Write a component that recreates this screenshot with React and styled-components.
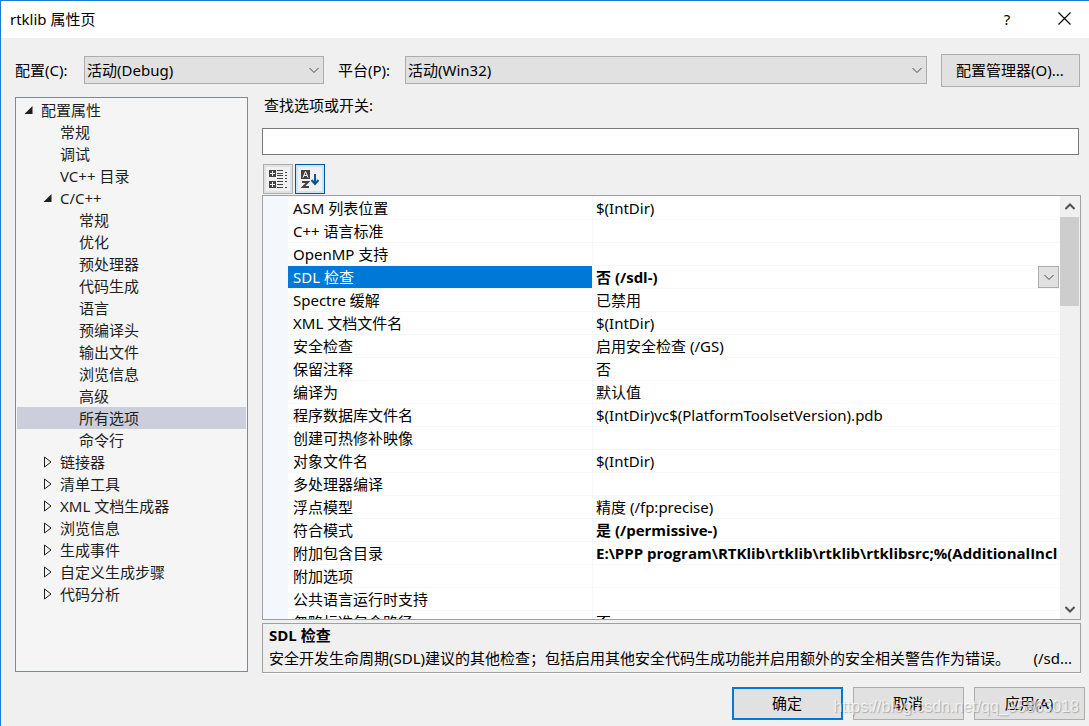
import React, { useState } from 'react';
import styled, { createGlobalStyle } from 'styled-components';

const GlobalStyle = createGlobalStyle`
  * {
    box-sizing: border-box;
  }
  body {
    margin: 0;
    background: #f0f0f0;
  }
  body, button, input, select {
    font-family: 'Noto Sans', 'Noto Sans CJK SC', sans-serif;
    font-size: 15px;
    line-height: 22px;
    color: #000;
  }
`;

const Window = styled.div`
  height: 100vh;
  display: flex;
  flex-direction: column;
  border-top: 1px solid #1a7fd4;
  border-left: 1px solid #1a7fd4;
  background: #f0f0f0;
  overflow: hidden;
`;

const TitleBar = styled.header`
  flex: none;
  height: 37px;
  display: flex;
  align-items: center;
  justify-content: space-between;
  padding-left: 9px;
  background: #fff;
`;

const Title = styled.h1`
  margin: 0;
  padding-bottom: 2px;
  font-size: 15px;
  font-weight: 400;
`;

const TitleButtons = styled.div`
  display: flex;
`;

const TitleButton = styled.button`
  width: 57px;
  height: 36px;
  display: flex;
  align-items: center;
  justify-content: center;
  padding: 0 0 2px 7px;
  border: 0;
  background: transparent;
`;

const ConfigBar = styled.div`
  flex: none;
  display: flex;
  align-items: center;
  padding: 16px 9px 10px 14px;
`;

const ConfigLabel = styled.label`
  flex: none;
  width: ${(p) => p.$width}px;
  padding-bottom: 2px;
  white-space: nowrap;
`;

const SelectBox = styled.div`
  flex: ${(p) => (p.$grow ? '1 1 0' : '0 0 240px')};
  margin-right: 14px;
  padding-bottom: 1px;
  display: grid;
  align-items: center;

  > * {
    grid-area: 1 / 1;
  }
  > svg {
    justify-self: end;
    margin-right: 4px;
    pointer-events: none;
  }
`;

const Select = styled.select`
  appearance: none;
  width: 100%;
  height: 28px;
  padding: 0 20px 0 2px;
  border: 1px solid #adadad;
  border-radius: 0;
  background: #e1e1e1;
`;

const Button = styled.button`
  flex: none;
  width: ${(p) => p.$width || 111}px;
  height: 33px;
  padding: 0 1px 2px 0;
  border: ${(p) => (p.$primary ? '2px solid #0078d7' : '1px solid #adadad')};
  background: #e1e1e1;
`;

const Body = styled.main`
  flex: 1;
  min-height: 0;
  display: flex;
  gap: 14px;
  padding: 0 8px 0 14px;
`;

const Tree = styled.nav`
  flex: none;
  width: 233px;
  margin-bottom: 1px;
  padding: 1px;
  border: 1px solid #828790;
  background: #f5f5f5;
`;

const TreeItem = styled.button`
  width: 100%;
  height: 22px;
  display: flex;
  align-items: center;
  gap: 6px;
  padding: 0 0 0 ${(p) => 5 + p.$level * 19}px;
  border: 0;
  background: ${(p) => (p.$selected ? '#cccedb' : 'transparent')};
  color: #1e1e1e;
  white-space: nowrap;
`;

const ArrowSlot = styled.span`
  width: 13px;
  height: 12px;
  display: flex;
  justify-content: center;
`;

const Options = styled.section`
  flex: 1;
  min-width: 0;
  display: flex;
  flex-direction: column;
`;

const SearchLabel = styled.label`
  height: 31px;
  padding: 0 0 0 2px;
  line-height: 16px;
`;

const SearchInput = styled.input`
  flex: none;
  height: 27px;
  margin-right: 2px;
  padding: 0 4px;
  border: 1px solid #7a7a7a;
  border-radius: 0;
  background: #fff;
  outline: none;
`;

const Toolbar = styled.div`
  flex: none;
  display: flex;
  gap: 2px;
  padding: 9px 1px 1px;
`;

const ToolButton = styled.button`
  width: 30px;
  height: 30px;
  display: flex;
  align-items: center;
  justify-content: center;
  padding: 0;
  border: 1px solid ${(p) => (p.$active ? '#005499' : '#adadad')};
  background: #f0f0f0;
  box-shadow: inset 0 0 0 2px ${(p) => (p.$active ? '#cce4f7' : '#e1e1e1')};
`;

const GridFrame = styled.div`
  flex: 1;
  min-height: 0;
  display: flex;
  border: 1px solid #a0a0a0;
  background: #fff;
`;

const GridGutter = styled.div`
  flex: none;
  width: 25px;
  background: #f4f7fc;
`;

const GridViewport = styled.div`
  flex: 1;
  min-width: 0;
  overflow: hidden;
`;

const PropertyTable = styled.table`
  width: 100%;
  table-layout: fixed;
  border-collapse: separate;
  border-spacing: 0;
`;

const NameCell = styled.th`
  width: 305px;
  height: 23px;
  padding: 0 0 0 5px;
  border-right: 1px solid #f4f7fc;
  border-top: 1px solid #f4f7fc;
  background: ${(p) => (p.$selected ? '#0078d7' : '#fff')};
  background-clip: padding-box;
  color: ${(p) => (p.$selected ? '#fff' : '#000')};
  font-weight: 400;
  text-align: left;
  white-space: nowrap;
`;

const ValueCell = styled.td`
  height: 23px;
  padding: 0 0 0 3px;
  border-top: 1px solid #f4f7fc;
  font-family: ${(p) => (p.$bold ? "'Open Sans', 'Noto Sans CJK SC', sans-serif" : 'inherit')};
  font-weight: ${(p) => (p.$bold ? 700 : 400)};
  white-space: nowrap;
  overflow: hidden;
`;

const ValueLine = styled.div`
  height: 22px;
  display: flex;
  align-items: center;
  justify-content: space-between;
`;

const DropButton = styled.button`
  width: 21px;
  height: 22px;
  display: flex;
  align-items: center;
  justify-content: center;
  padding: 0;
  border: 1px solid #adadad;
  background: #e1e1e1;
`;

const ScrollBar = styled.div`
  flex: none;
  width: 20px;
  display: flex;
  flex-direction: column;
  margin-left: 1px;
  background: #f0f0f0;
`;

const ScrollButton = styled.button`
  flex: none;
  height: 21px;
  display: flex;
  align-items: center;
  justify-content: center;
  padding: 0 1px 0 0;
  border: 0;
  background: transparent;
`;

const ScrollTrack = styled.div`
  flex: 1;
  padding-right: 1px;
`;

const ScrollThumb = styled.div`
  height: 89px;
  background: #cdcdcd;
`;

const Description = styled.section`
  flex: none;
  height: 50px;
  margin-top: 3px;
  padding: 0 6px;
  border: 1px solid #a0a0a0;
  box-shadow: 0 1px 0 #fff;
`;

const DescriptionTitle = styled.h2`
  margin: 0;
  font-family: 'Open Sans', 'Noto Sans CJK SC', sans-serif;
  font-size: 15px;
  font-weight: 700;
  line-height: 23px;
`;

const DescriptionLine = styled.div`
  display: flex;
  justify-content: space-between;
  padding-right: 2px;
  line-height: 23px;
  white-space: nowrap;
`;

const Footer = styled.footer`
  position: relative;
  flex: none;
  height: 53px;
  display: flex;
  justify-content: flex-end;
  gap: 10px;
  padding: 14px 4px 0 0;
`;

const Watermark = styled.span`
  position: absolute;
  right: 10px;
  bottom: 8px;
  font-family: 'Liberation Sans', sans-serif;
  font-size: 16px;
  line-height: 22px;
  color: rgba(255, 255, 255, 0.7);
  text-shadow: 1px 1px 1px rgba(0, 0, 0, 0.25);
  pointer-events: none;
`;

const treeItems = [
  { label: '配置属性', level: 0, arrow: 'open' },
  { label: '常规', level: 1 },
  { label: '调试', level: 1 },
  { label: 'VC++ 目录', level: 1 },
  { label: 'C/C++', level: 1, arrow: 'open' },
  { label: '常规', level: 2 },
  { label: '优化', level: 2 },
  { label: '预处理器', level: 2 },
  { label: '代码生成', level: 2 },
  { label: '语言', level: 2 },
  { label: '预编译头', level: 2 },
  { label: '输出文件', level: 2 },
  { label: '浏览信息', level: 2 },
  { label: '高级', level: 2 },
  { label: '所有选项', level: 2 },
  { label: '命令行', level: 2 },
  { label: '链接器', level: 1, arrow: 'closed' },
  { label: '清单工具', level: 1, arrow: 'closed' },
  { label: 'XML 文档生成器', level: 1, arrow: 'closed' },
  { label: '浏览信息', level: 1, arrow: 'closed' },
  { label: '生成事件', level: 1, arrow: 'closed' },
  { label: '自定义生成步骤', level: 1, arrow: 'closed' },
  { label: '代码分析', level: 1, arrow: 'closed' },
];

const properties = [
  { name: 'ASM 列表位置', value: '$(IntDir)' },
  { name: 'C++ 语言标准', value: '' },
  { name: 'OpenMP 支持', value: '' },
  { name: 'SDL 检查', value: '否 (/sdl-)', bold: true },
  { name: 'Spectre 缓解', value: '已禁用' },
  { name: 'XML 文档文件名', value: '$(IntDir)' },
  { name: '安全检查', value: '启用安全检查 (/GS)' },
  { name: '保留注释', value: '否' },
  { name: '编译为', value: '默认值' },
  { name: '程序数据库文件名', value: '$(IntDir)vc$(PlatformToolsetVersion).pdb' },
  { name: '创建可热修补映像', value: '' },
  { name: '对象文件名', value: '$(IntDir)' },
  { name: '多处理器编译', value: '' },
  { name: '浮点模型', value: '精度 (/fp:precise)' },
  { name: '符合模式', value: '是 (/permissive-)', bold: true },
  {
    name: '附加包含目录',
    value: 'E:\\PPP program\\RTKlib\\rtklib\\rtklib\\rtklibsrc;%(AdditionalIncl',
    bold: true,
  },
  { name: '附加选项', value: '' },
  { name: '公共语言运行时支持', value: '' },
  { name: '忽略标准包含路径', value: '否' },
];

const Chevron = ({ up, thick }) => (
  <svg width="12" height="12" viewBox="0 0 12 12" fill="none" stroke={thick ? '#505050' : '#444'} strokeWidth={thick ? 2 : 1}>
    <path d={up ? 'M1.5 8 6 3.5 10.5 8' : 'M1.5 4 6 8.5 10.5 4'} />
  </svg>
);

const TreeArrow = ({ state }) =>
  state === 'open' ? (
    <svg width="12" height="12" viewBox="0 0 12 12">
      <path d="M9.500 2v8H1.500z" fill="#1e1e1e" />
    </svg>
  ) : (
    <svg width="12" height="12" viewBox="0 0 12 12">
      <path d="M2.500 1v10L9 6z" fill="none" stroke="#1e1e1e" />
    </svg>
  );

const CategoryIcon = () => (
  <svg width="20" height="20" viewBox="0 0 20 20" shapeRendering="crispEdges">
    <path fill="#424242" d="M1 1h7v7H1zM1 12h7v7H1z" />
    <path fill="#f0f0f0" d="M4 2h1v2h2v1H5v2H4V5H2V4h2zM4 13h1v2h2v1H5v2H4v-2H2v-1h2z" />
    <path fill="#424242" d="M9 1h6v1H9zM9 4h6v1H9zM9 6h6v1H9zM9 9h6v1H9zM9 12h6v1H9zM9 15h6v1H9zM9 18h6v1H9zM17 3h2v1h-2zM17 6h2v1h-2zM17 9h2v1h-2zM17 12h2v1h-2zM17 18h2v1h-2z" />
  </svg>
);

const SortIcon = () => (
  <svg width="20" height="20" viewBox="0 0 20 20">
    <path fill="#424242" d="M1 1h9v9H1z" />
    <path fill="none" stroke="#fff" d="M3 8.500 5.500 2.500 8 8.500M4 6.500h3" />
    <path fill="none" stroke="#424242" strokeWidth="2" d="M2 13h6L3 18h6" />
    <path fill="none" stroke="#00539c" strokeWidth="2" d="M15 5v10M11.500 11l3.500 4 3.500-4" />
  </svg>
);

const App = () => {
  const [currentPage, setCurrentPage] = useState(14);
  const [currentProperty, setCurrentProperty] = useState(3);
  const [sorted, setSorted] = useState(true);
  const [search, setSearch] = useState('');

  return (
    <>
      <GlobalStyle />
      <Window>
        <TitleBar>
          <Title>rtklib 属性页</Title>
          <TitleButtons>
            <TitleButton aria-label="帮助">?</TitleButton>
            <TitleButton aria-label="关闭">
              <svg width="13" height="13" viewBox="0 0 13 13" stroke="#000" strokeWidth="1.2">
                <path d="M.5.5l12 12M12.500.5l-12 12" />
              </svg>
            </TitleButton>
          </TitleButtons>
        </TitleBar>

        <ConfigBar>
          <ConfigLabel htmlFor="configuration" $width={69}>配置(C):</ConfigLabel>
          <SelectBox>
            <Select id="configuration" defaultValue="Debug">
              <option value="Debug">活动(Debug)</option>
            </Select>
            <Chevron />
          </SelectBox>
          <ConfigLabel htmlFor="platform" $width={67}>平台(P):</ConfigLabel>
          <SelectBox $grow>
            <Select id="platform" defaultValue="Win32">
              <option value="Win32">活动(Win32)</option>
            </Select>
            <Chevron />
          </SelectBox>
          <Button $width={139}>配置管理器(O)...</Button>
        </ConfigBar>

        <Body>
          <Tree>
            {treeItems.map((item, index) => (
              <TreeItem
                key={index}
                $level={item.level}
                $selected={index === currentPage}
                onClick={() => setCurrentPage(index)}
              >
                <ArrowSlot>{item.arrow && <TreeArrow state={item.arrow} />}</ArrowSlot>
                {item.label}
              </TreeItem>
            ))}
          </Tree>

          <Options>
            <SearchLabel htmlFor="search">查找选项或开关:</SearchLabel>
            <SearchInput id="search" value={search} onChange={(e) => setSearch(e.target.value)} />

            <Toolbar>
              <ToolButton aria-label="按类别" $active={!sorted} onClick={() => setSorted(false)}>
                <CategoryIcon />
              </ToolButton>
              <ToolButton aria-label="按字母顺序" $active={sorted} onClick={() => setSorted(true)}>
                <SortIcon />
              </ToolButton>
            </Toolbar>

            <GridFrame>
              <GridGutter />
              <GridViewport>
                <PropertyTable>
                  <tbody>
                    {properties.map((item, index) => (
                      <tr key={item.name} onClick={() => setCurrentProperty(index)}>
                        <NameCell scope="row" $selected={index === currentProperty}>{item.name}</NameCell>
                        <ValueCell $bold={item.bold}>
                          <ValueLine>
                            {item.value}
                            {index === currentProperty && (
                              <DropButton aria-label="展开"><Chevron /></DropButton>
                            )}
                          </ValueLine>
                        </ValueCell>
                      </tr>
                    ))}
                  </tbody>
                </PropertyTable>
              </GridViewport>
              <ScrollBar>
                <ScrollButton aria-label="向上滚动"><Chevron up thick /></ScrollButton>
                <ScrollTrack>
                  <ScrollThumb />
                </ScrollTrack>
                <ScrollButton aria-label="向下滚动"><Chevron thick /></ScrollButton>
              </ScrollBar>
            </GridFrame>

            <Description>
              <DescriptionTitle>SDL 检查</DescriptionTitle>
              <DescriptionLine>
                <span>安全开发生命周期(SDL)建议的其他检查；包括启用其他安全代码生成功能并启用额外的安全相关警告作为错误。</span>
                <span>(/sd...</span>
              </DescriptionLine>
            </Description>
          </Options>
        </Body>

        <Footer>
          <Button $primary>确定</Button>
          <Button>取消</Button>
          <Button>应用(A)</Button>
          <Watermark>https://blog.csdn.net/qq_35863018</Watermark>
        </Footer>
      </Window>
    </>
  );
};

export default App;
